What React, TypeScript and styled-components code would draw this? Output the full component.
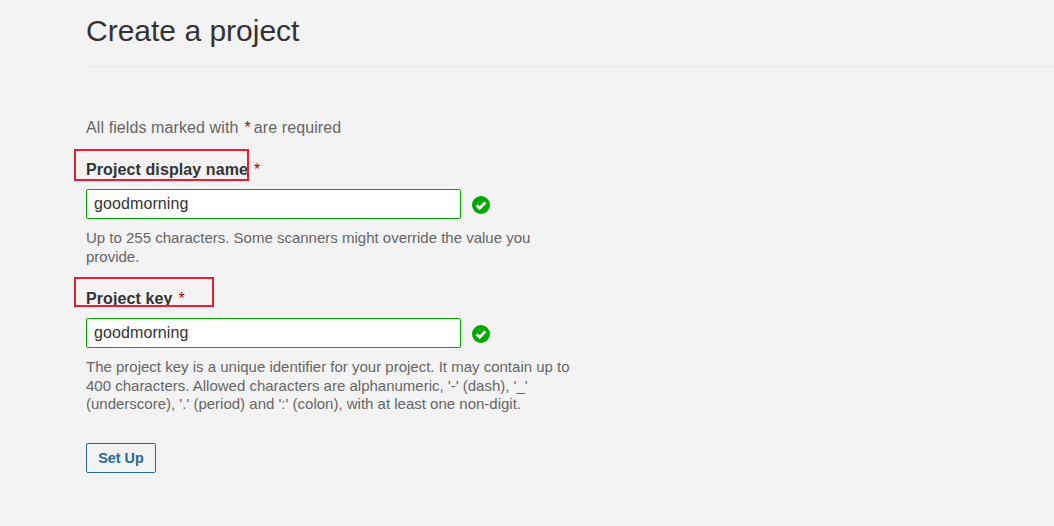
import React from "react";
import styled, { createGlobalStyle } from "styled-components";

const GlobalStyle = createGlobalStyle`
    html, body {
        margin: 0;
        padding: 0;
        height: 100%;
        background: #f3f3f3;
        overflow: hidden;
    }
`;

const Page = styled.div`
    width: 1054px;
    height: 526px;
    padding-left: 86px;
    box-sizing: border-box;
    font-family: "Liberation Sans", Arial, sans-serif;
    color: #333;
    background: #f3f3f3;
`;

const Header = styled.header`
    height: 67px;
    box-sizing: border-box;
    padding-top: 13px;
    border-bottom: 1px solid #e6e6e6;
`;

const Title = styled.h1`
    margin: 0;
    font-size: 30px;
    line-height: 36px;
    font-weight: 400;
    color: #333;
`;

const Form = styled.form`
    display: flex;
    flex-direction: column;
    align-items: flex-start;
    padding-top: 51px;
`;

const RequiredNote = styled.p`
    margin: 0 0 22px;
    font-size: 16px;
    line-height: 20px;
    letter-spacing: 0.1px;
    color: #666;
`;

const Star = styled.span`
    color: #a4030f;
    margin-left: 6px;
    margin-right: 3px;
`;

const Field = styled.div`
    margin-bottom: 23px;
`;

const LabelWrap = styled.div`
    position: relative;
    height: 20px;
    margin-bottom: 9px;
`;

const Label = styled.label`
    font-size: 16px;
    line-height: 20px;
    font-weight: 700;
    letter-spacing: 0.1px;
    color: #333;
`;

const Marker = styled.span<{ $width: number; $height: number; $top: number }>`
    position: absolute;
    left: -12px;
    top: ${(p) => p.$top}px;
    width: ${(p) => p.$width}px;
    height: ${(p) => p.$height}px;
    box-sizing: border-box;
    border: 2px solid #ed1c2e;
    pointer-events: none;
`;

const InputRow = styled.div`
    display: flex;
    align-items: center;
    gap: 11px;

    svg {
        margin-top: 2px;
    }
`;

const Input = styled.input`
    width: 375px;
    height: 30px;
    box-sizing: border-box;
    padding: 0 7px;
    border: 1px solid #00aa00;
    border-radius: 2px;
    background: #fff;
    font-family: inherit;
    font-size: 16px;
    letter-spacing: 0.1px;
    color: #333;
    outline: none;
`;

const Hint = styled.p`
    width: 490px;
    margin: 10px 0 0;
    font-size: 15px;
    line-height: 18.5px;
    color: #666;
`;

const SubmitButton = styled.button`
    margin-top: 6px;
    width: 70px;
    height: 30px;
    padding: 0;
    border: 1px solid #236a97;
    border-radius: 2px;
    background: transparent;
    font-family: inherit;
    font-size: 14.4px;
    font-weight: 700;
    color: #236a97;
`;

function CheckIcon() {
    return (
        <svg width="18" height="18" viewBox="0 0 18 18">
            <circle cx="9" cy="9" r="9" fill="#00aa00" />
            <path d="M4.6 9.2 L7.6 12.2 L13.4 6.4" fill="none" stroke="#fff" strokeWidth="2.8" />
        </svg>
    );
}

export default function App() {
    return (
        <Page>
            <GlobalStyle />
            <Header>
                <Title>Create a project</Title>
            </Header>
            <Form onSubmit={(e) => e.preventDefault()}>
                <RequiredNote>
                    All fields marked with<Star>*</Star>are required
                </RequiredNote>
                <Field>
                    <LabelWrap>
                        <Label>Project display name</Label>
                        <Star>*</Star>
                        <Marker $width={175} $height={32} $top={-11} />
                    </LabelWrap>
                    <InputRow>
                        <Input defaultValue="goodmorning" />
                        <CheckIcon />
                    </InputRow>
                    <Hint>
                        Up to 255 characters. Some scanners might override the value you provide.
                    </Hint>
                </Field>
                <Field>
                    <LabelWrap>
                        <Label>Project key</Label>
                        <Star>*</Star>
                        <Marker $width={140} $height={30} $top={-12} />
                    </LabelWrap>
                    <InputRow>
                        <Input defaultValue="goodmorning" />
                        <CheckIcon />
                    </InputRow>
                    <Hint>
                        The project key is a unique identifier for your project. It may contain up
                        to 400 characters. Allowed characters are alphanumeric, '-' (dash), '_'
                        (underscore), '.' (period) and ':' (colon), with at least one non-digit.
                    </Hint>
                </Field>
                <SubmitButton type="submit">Set Up</SubmitButton>
            </Form>
        </Page>
    );
}
